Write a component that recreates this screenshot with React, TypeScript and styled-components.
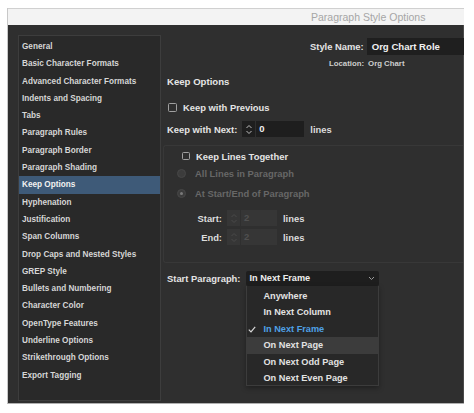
import styled, { createGlobalStyle } from 'styled-components';

const GlobalStyle = createGlobalStyle`
  html, body {
    margin: 0;
    padding: 0;
    background: #ffffff;
  }
  body {
    font-family: "Liberation Sans", Arial, sans-serif;
  }
`;

const SECTIONS = [
  'General',
  'Basic Character Formats',
  'Advanced Character Formats',
  'Indents and Spacing',
  'Tabs',
  'Paragraph Rules',
  'Paragraph Border',
  'Paragraph Shading',
  'Keep Options',
  'Hyphenation',
  'Justification',
  'Span Columns',
  'Drop Caps and Nested Styles',
  'GREP Style',
  'Bullets and Numbering',
  'Character Color',
  'OpenType Features',
  'Underline Options',
  'Strikethrough Options',
  'Export Tagging',
];

const START_OPTIONS = [
  'Anywhere',
  'In Next Column',
  'In Next Frame',
  'On Next Page',
  'On Next Odd Page',
  'On Next Even Page',
];

const Spinner = ({ dim }: { dim?: boolean }) => (
  <StyledSpin dim={dim}>
    <svg width="8" height="11" viewBox="0 0 8 11">
      <path
        d="M1.5 4 L4 1.5 L6.5 4 M1.5 7 L4 9.5 L6.5 7"
        fill="none"
        stroke={dim ? '#4a4a4a' : '#bdbdbd'}
        strokeWidth="1"
      />
    </svg>
  </StyledSpin>
);

const App = () => {
  const current = 'Keep Options';
  const selectedStart = 'In Next Frame';
  const hovered = 'On Next Page';

  return (
    <>
      <GlobalStyle />
      <StyledWindow>
        <StyledTitleBar>Paragraph Style Options</StyledTitleBar>
        <StyledBody>
          <StyledSidebar>
            {SECTIONS.map((name) => (
              <StyledSideItem key={name} active={name === current}>
                {name}
              </StyledSideItem>
            ))}
          </StyledSidebar>

          <StyledContent>
            <StyledNameRow>
              <StyledLabel>Style Name:</StyledLabel>
              <StyledNameInput>Org Chart Role</StyledNameInput>
            </StyledNameRow>
            <StyledLocationRow>
              Location:<span>Org Chart</span>
            </StyledLocationRow>

            <StyledHeading>Keep Options</StyledHeading>

            <StyledRow top={10}>
              <StyledCheck />
              <StyledLabel>Keep with Previous</StyledLabel>
            </StyledRow>

            <StyledRow top={6}>
              <StyledLabel>Keep with Next:</StyledLabel>
              <StyledField>
                <Spinner />
                <StyledFieldInput>0</StyledFieldInput>
              </StyledField>
              <StyledUnit>lines</StyledUnit>
            </StyledRow>

            <StyledGroup>
              <StyledGroupRow indent={17}>
                <StyledCheck size={8} />
                <StyledLabel>Keep Lines Together</StyledLabel>
              </StyledGroupRow>
              <StyledGroupRow indent={13} top={3}>
                <StyledRadio />
                <StyledLabel dim>All Lines in Paragraph</StyledLabel>
              </StyledGroupRow>
              <StyledGroupRow indent={13} top={6}>
                <StyledRadio checked />
                <StyledLabel dim>At Start/End of Paragraph</StyledLabel>
              </StyledGroupRow>
              {['Start:', 'End:'].map((label, i) => (
                <StyledGroupRow key={label} top={i === 0 ? 11 : 5}>
                  <StyledNumLabel>{label}</StyledNumLabel>
                  <StyledField dim width={50}>
                    <Spinner dim />
                    <StyledFieldInput dim>2</StyledFieldInput>
                  </StyledField>
                  <StyledUnit>lines</StyledUnit>
                </StyledGroupRow>
              ))}
            </StyledGroup>

            <StyledRow top={7}>
              <StyledLabel>Start Paragraph:</StyledLabel>
              <StyledSelectWrap>
                <StyledSelect>
                  {selectedStart}
                  <svg width="7" height="5" viewBox="0 0 7 5">
                    <path d="M1 1 L3.5 3.5 L6 1" fill="none" stroke="#9a9a9a" strokeWidth="1" />
                  </svg>
                </StyledSelect>
                <StyledMenu>
                  {START_OPTIONS.map((opt) => (
                    <StyledMenuItem
                      key={opt}
                      checked={opt === selectedStart}
                      hover={opt === hovered}
                    >
                      {opt === selectedStart && (
                        <StyledTick>
                          <svg width="8" height="7" viewBox="0 0 8 7">
                            <path d="M0.8 3.6 L3 5.8 L7.2 0.8" fill="none" stroke="#d8d8d8" strokeWidth="1.2" />
                          </svg>
                        </StyledTick>
                      )}
                      {opt}
                    </StyledMenuItem>
                  ))}
                </StyledMenu>
              </StyledSelectWrap>
            </StyledRow>
          </StyledContent>
        </StyledBody>
      </StyledWindow>
    </>
  );
};

const StyledWindow = styled.div`
  margin: 8px 0 0 7px;
  width: 457px;
  height: 396px;
  display: flex;
  flex-direction: column;
  overflow: hidden;
  border-left: 1px solid #c8c8c8;
  border-bottom: 1px solid #b0b0b0;
  box-sizing: border-box;
`;

const StyledTitleBar = styled.div`
  height: 17px;
  flex: 0 0 17px;
  background: #f3f3f3;
  border-top: 1px solid #d0d0d0;
  box-sizing: border-box;
  color: #a6a6a6;
  font-size: 10.5px;
  line-height: 16px;
  padding-left: 303px;
  white-space: nowrap;
`;

const StyledBody = styled.div`
  flex: 1;
  display: flex;
  background: #2f2f2f;
  padding: 10px 0 2px 10px;
  border-right: 1px solid #4a4a4a;
  min-height: 0;
`;

const StyledSidebar = styled.div`
  width: 143px;
  flex: 0 0 143px;
  box-sizing: border-box;
  background: #292929;
  border: 1px solid #3d3d3d;
  padding-top: 2px;
`;

const StyledSideItem = styled.div<{ active?: boolean }>`
  height: 17.3px;
  line-height: 17.3px;
  padding-left: 3px;
  font-size: 8.2px;
  font-weight: bold;
  white-space: nowrap;
  color: ${({ active }) => (active ? '#f2f2f2' : '#d6d6d6')};
  background: ${({ active }) => (active ? '#3e5a78' : 'transparent')};
`;

const StyledContent = styled.div`
  flex: 1;
  min-width: 0;
  padding-left: 6px;
  display: flex;
  flex-direction: column;
`;

const StyledLabel = styled.span<{ dim?: boolean }>`
  font-size: 9.4px;
  font-weight: bold;
  white-space: nowrap;
  color: ${({ dim }) => (dim ? '#676767' : '#e4e4e4')};
`;

const StyledNameRow = styled.div`
  margin-top: 3px;
  height: 17px;
  display: flex;
  align-items: center;
  gap: 3px;
  padding-left: 143px;
`;

const StyledNameInput = styled.div`
  flex: 0 0 120px;
  height: 17px;
  background: #1f1f1f;
  color: #f0f0f0;
  font-size: 9.6px;
  font-weight: bold;
  line-height: 17px;
  padding-left: 5px;
  box-sizing: border-box;
  white-space: nowrap;
`;

const StyledLocationRow = styled.div`
  margin-top: 3px;
  height: 12px;
  line-height: 12px;
  padding-left: 162px;
  font-size: 7.8px;
  font-weight: bold;
  color: #cdcdcd;
  white-space: nowrap;

  span {
    margin-left: 4px;
  }
`;

const StyledHeading = styled.div`
  margin-top: 5px;
  height: 14px;
  line-height: 14px;
  font-size: 9.6px;
  font-weight: bold;
  color: #e6e6e6;
`;

const StyledRow = styled.div<{ top: number }>`
  margin-top: ${({ top }) => top}px;
  height: 16px;
  display: flex;
  align-items: center;
  gap: 5px;
`;

const StyledCheck = styled.span<{ size?: number }>`
  width: ${({ size }) => size ?? 9}px;
  height: ${({ size }) => size ?? 9}px;
  flex: 0 0 auto;
  box-sizing: border-box;
  border: 1px solid #a0a0a0;
  border-radius: 1.5px;
  margin-left: 1px;
  margin-right: 1px;
`;

const StyledRadio = styled.span<{ checked?: boolean }>`
  width: 9px;
  height: 9px;
  flex: 0 0 auto;
  box-sizing: border-box;
  border-radius: 50%;
  background: #3c3c3c;
  border: 1px solid #474747;
  display: flex;
  align-items: center;
  justify-content: center;
  margin-right: 4px;

  &::after {
    content: '';
    display: ${({ checked }) => (checked ? 'block' : 'none')};
    width: 3px;
    height: 3px;
    border-radius: 50%;
    background: #7a7a7a;
  }
`;

const StyledField = styled.div<{ dim?: boolean; width?: number }>`
  width: ${({ width }) => width ?? 62}px;
  height: 16px;
  display: flex;
  box-sizing: border-box;
  gap: 1px;
`;

const StyledSpin = styled.div<{ dim?: boolean }>`
  width: 13px;
  flex: 0 0 13px;
  background: ${({ dim }) => (dim ? '#363636' : '#1e1e1e')};
  display: flex;
  align-items: center;
  justify-content: center;
`;

const StyledFieldInput = styled.div<{ dim?: boolean }>`
  flex: 1;
  background: ${({ dim }) => (dim ? '#363636' : '#1e1e1e')};
  color: ${({ dim }) => (dim ? '#505050' : '#eeeeee')};
  font-size: 9.5px;
  font-weight: bold;
  line-height: 16px;
  padding-left: 3px;
`;

const StyledUnit = styled.span`
  font-size: 9.4px;
  font-weight: bold;
  color: #dcdcdc;
  margin-left: 1px;
`;

const StyledGroup = styled.div`
  margin: 8px 0 0 -4px;
  height: 118px;
  box-sizing: border-box;
  border: 1px solid #383838;
  border-right: none;
  border-radius: 3px 0 0 3px;
  padding-top: 3px;
  display: flex;
  flex-direction: column;
`;

const StyledGroupRow = styled.div<{ indent?: number; top?: number }>`
  margin-top: ${({ top }) => top ?? 0}px;
  padding-left: ${({ indent }) => indent ?? 0}px;
  height: 14px;
  display: flex;
  align-items: center;
  gap: 5px;
`;

const StyledNumLabel = styled.span`
  width: 58px;
  text-align: right;
  font-size: 9.4px;
  font-weight: bold;
  color: #dcdcdc;
`;

const StyledSelectWrap = styled.div`
  position: relative;
  margin-left: 1px;
`;

const StyledSelect = styled.div`
  width: 133px;
  height: 15px;
  box-sizing: border-box;
  background: #1e1e1e;
  border-radius: 2px;
  color: #ececec;
  font-size: 9.2px;
  font-weight: bold;
  display: flex;
  align-items: center;
  justify-content: space-between;
  padding: 0 4px 0 3px;
  white-space: nowrap;
`;

const StyledMenu = styled.div`
  position: absolute;
  left: 0;
  top: 15px;
  width: 133px;
  height: 100px;
  box-sizing: border-box;
  background: #282828;
  border: 1px solid #3c3c3c;
  border-top: none;
  padding-top: 2px;
  box-shadow: 0 2px 5px rgba(0, 0, 0, 0.35);
`;

const StyledMenuItem = styled.div<{ checked?: boolean; hover?: boolean }>`
  position: relative;
  height: 16.6px;
  line-height: 16.6px;
  padding-left: 16px;
  font-size: 9.2px;
  font-weight: bold;
  white-space: nowrap;
  color: ${({ checked }) => (checked ? '#4fa0e6' : '#e2e2e2')};
  background: ${({ hover }) => (hover ? '#3c3c3c' : 'transparent')};
`;

const StyledTick = styled.span`
  position: absolute;
  left: 1px;
  top: 5px;
  display: flex;
`;

export default App;
